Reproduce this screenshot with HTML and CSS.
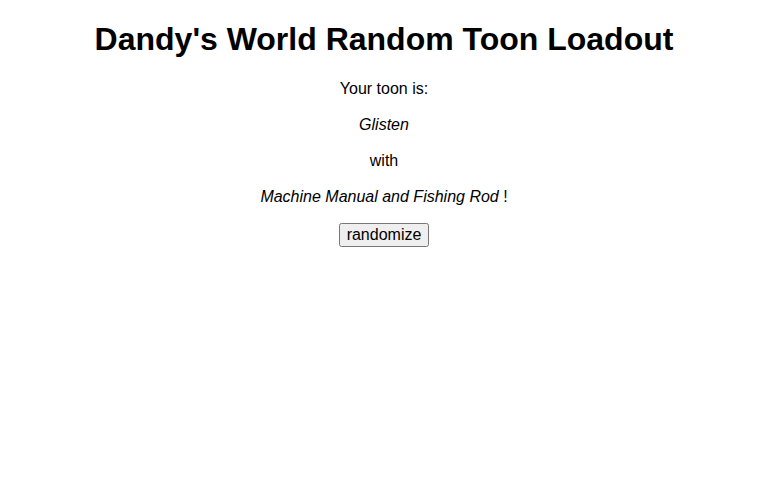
FILE: index.html
```html
<!DOCTYPE html>
<html lang="en">
<head>
    <meta charset="UTF-8">
    <meta name="viewport" content="width=device-width, initial-scale=1.0">
    <title>Dandy's World Random Toon Loadout</title>
    <link rel="stylesheet" href="styles.css">
</head>
<body>
    <h1>Dandy's World Random Toon Loadout</h1>
    <p>Your toon is:</p>
    <p><em id="toon">Glisten</em></p>
    <p>with</p>
    <p><em id="items">Machine Manual and Fishing Rod</em> !</p>
    <button class="roll" id="roll">randomize</button>
</body>
</html>
```

FILE: styles.css
```css
body {
    margin: 0;
    font-family: "Liberation Sans", Arial, sans-serif;
    text-align: center;
    color: #000;
    background: #fff;
}
h1 {
    font-size: 32px;
    margin: 21px 0;
}
p {
    font-size: 16px;
    line-height: 20px;
}
.roll {
    font-family: "Liberation Sans", Arial, sans-serif;
    font-size: 16px;
    padding: 1px 6px;
}
```
